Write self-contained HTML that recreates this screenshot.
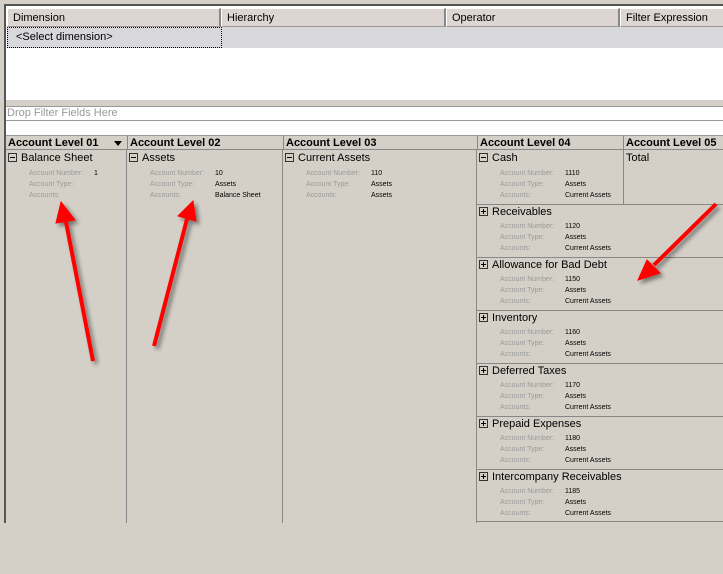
<!DOCTYPE html>
<html><head><style>
*{margin:0;padding:0;box-sizing:border-box}
body{width:723px;height:523px;overflow:hidden;background:#d4d0c8;font-family:"Liberation Sans",sans-serif;position:relative}
.a{position:absolute}
.h{font-size:11px;color:#000;background:#dcd5d1;height:19px;top:8px;line-height:18px;padding-left:5px;border-right:2px solid #888;border-bottom:1px solid #999;border-left:1px solid #fff;border-top:1px solid #fff}
.ch{top:136px;height:14px;font-weight:bold;font-size:11px;line-height:14px;padding-left:2px;border-left:1px solid #888}
.col{top:150px;bottom:0;border-left:1px solid #888}
.t{font-size:11px;line-height:13px;white-space:nowrap}
.box{display:inline-block;width:9px;height:9px;border:1px solid #333;position:relative;vertical-align:-1px;margin-right:4px;background:#d4d0c8}
.box:before{content:"";position:absolute;left:1px;right:1px;top:3px;height:1px;background:#000}
.p:after{content:"";position:absolute;top:1px;bottom:1px;left:3px;width:1px;background:#000}
.d{font-size:7px;line-height:11px;white-space:nowrap}
.d span{color:#9a9a9a;display:inline-block}
.row{left:477px;right:0;height:53px;border-top:1px solid #888}
</style></head><body>
<div class="a" style="left:0;top:0;width:723px;height:4px;background:#d4d0c8"></div>
<div class="a" style="left:4px;top:4px;width:719px;height:2px;background:#555"></div>
<div class="a" style="left:4px;top:4px;width:2px;height:519px;background:#555"></div>
<div class="a" style="left:6px;top:6px;width:717px;height:94px;background:#fff"></div>
<div class="a h" style="left:7px;width:214px">Dimension</div>
<div class="a h" style="left:221px;width:225px">Hierarchy</div>
<div class="a h" style="left:446px;width:174px">Operator</div>
<div class="a h" style="left:620px;width:103px;border-right:none">Filter Expression</div>
<div class="a" style="left:7px;top:27px;width:716px;height:21px;background:#d8d8dc"></div>
<div class="a" style="left:7px;top:27px;width:215px;height:21px;border:1px dotted #000;font-size:11px;line-height:19px;padding-left:8px">&lt;Select dimension&gt;</div>
<div class="a" style="left:6px;top:100px;width:717px;height:1px;background:#ccc"></div>
<div class="a" style="left:6px;top:106px;width:717px;height:30px;background:#fff;border-top:1px solid #999;border-bottom:1px solid #999"></div>
<div class="a" style="left:6px;top:120px;width:717px;height:1px;background:#999"></div>
<div class="a" style="left:7px;top:107px;font-size:11px;line-height:13px;color:#999">Drop Filter Fields Here</div>
<div class="a" style="left:6px;top:149px;width:717px;height:1px;background:#888"></div>
<div class="a ch" style="left:6px;border-left:none">Account Level 01</div>
<div class="a" style="left:114px;top:141px;width:0;height:0;border-left:4px solid transparent;border-right:4px solid transparent;border-top:5px solid #000"></div>
<div class="a ch" style="left:127px">Account Level 02</div>
<div class="a ch" style="left:283px">Account Level 03</div>
<div class="a ch" style="left:477px">Account Level 04</div>
<div class="a ch" style="left:623px">Account Level 05</div>
<div class="a col" style="left:126px"></div>
<div class="a col" style="left:282px"></div>
<div class="a col" style="left:476px"></div>
<div class="a" style="left:623px;top:150px;height:54px;border-left:1px solid #888"></div>

<div class="a t" style="left:8px;top:152px"><i class="box"></i>Balance Sheet</div>
<div class="a d" style="left:29px;top:168px"><span style="width:65px">Account Number:</span>1<br><span>Account Type:</span><br><span>Accounts:</span></div>
<div class="a t" style="left:129px;top:152px"><i class="box"></i>Assets</div>
<div class="a d" style="left:150px;top:168px"><span style="width:65px">Account Number:</span>10<br><span style="width:65px">Account Type:</span>Assets<br><span style="width:65px">Accounts:</span>Balance Sheet</div>
<div class="a t" style="left:285px;top:152px"><i class="box"></i>Current Assets</div>
<div class="a d" style="left:306px;top:168px"><span style="width:65px">Account Number:</span>110<br><span style="width:65px">Account Type:</span>Assets<br><span style="width:65px">Accounts:</span>Assets</div>
<div class="a t" style="left:626px;top:152px">Total</div>

<div class="a t" style="left:479px;top:152px"><i class="box"></i>Cash</div>
<div class="a d" style="left:500px;top:168px"><span style="width:65px">Account Number:</span>1110<br><span style="width:65px">Account Type:</span>Assets<br><span style="width:65px">Accounts:</span>Current Assets</div>

<div class="a row" style="top:204px"></div><div class="a t" style="left:479px;top:206px"><i class="box p"></i>Receivables</div>
<div class="a d" style="left:500px;top:221px"><span style="width:65px">Account Number:</span>1120<br><span style="width:65px">Account Type:</span>Assets<br><span style="width:65px">Accounts:</span>Current Assets</div>
<div class="a row" style="top:257px"></div><div class="a t" style="left:479px;top:259px"><i class="box p"></i>Allowance for Bad Debt</div>
<div class="a d" style="left:500px;top:274px"><span style="width:65px">Account Number:</span>1150<br><span style="width:65px">Account Type:</span>Assets<br><span style="width:65px">Accounts:</span>Current Assets</div>
<div class="a row" style="top:310px"></div><div class="a t" style="left:479px;top:312px"><i class="box p"></i>Inventory</div>
<div class="a d" style="left:500px;top:327px"><span style="width:65px">Account Number:</span>1160<br><span style="width:65px">Account Type:</span>Assets<br><span style="width:65px">Accounts:</span>Current Assets</div>
<div class="a row" style="top:363px"></div><div class="a t" style="left:479px;top:365px"><i class="box p"></i>Deferred Taxes</div>
<div class="a d" style="left:500px;top:380px"><span style="width:65px">Account Number:</span>1170<br><span style="width:65px">Account Type:</span>Assets<br><span style="width:65px">Accounts:</span>Current Assets</div>
<div class="a row" style="top:416px"></div><div class="a t" style="left:479px;top:418px"><i class="box p"></i>Prepaid Expenses</div>
<div class="a d" style="left:500px;top:433px"><span style="width:65px">Account Number:</span>1180<br><span style="width:65px">Account Type:</span>Assets<br><span style="width:65px">Accounts:</span>Current Assets</div>
<div class="a row" style="top:469px"></div><div class="a t" style="left:479px;top:471px"><i class="box p"></i>Intercompany Receivables</div>
<div class="a d" style="left:500px;top:486px"><span style="width:65px">Account Number:</span>1185</span><br><span style="width:65px">Account Type:</span>Assets<br><span style="width:65px">Accounts:</span>Current Assets</div>
<div class="a row" style="top:521px"></div>

<svg class="a" style="left:0;top:0" width="723" height="523">
<defs><filter id="s" x="-50%" y="-50%" width="200%" height="200%"><feDropShadow dx="3" dy="3" stdDeviation="2" flood-color="#000" flood-opacity="0.45"/></filter></defs>
<g filter="url(#s)" fill="#f00" stroke="#f00">
<line x1="93" y1="361" x2="66" y2="222" stroke-width="4"/>
<polygon points="61,202 56,223 75,220" stroke-width="1"/>
<line x1="154" y1="346" x2="187" y2="219" stroke-width="4"/>
<polygon points="193,201 178,216 196,221" stroke-width="1"/>
<line x1="716" y1="204" x2="654" y2="265" stroke-width="4"/>
<polygon points="638,280 647,260 660,273" stroke-width="1"/>
</g>
</svg>
</body></html>
